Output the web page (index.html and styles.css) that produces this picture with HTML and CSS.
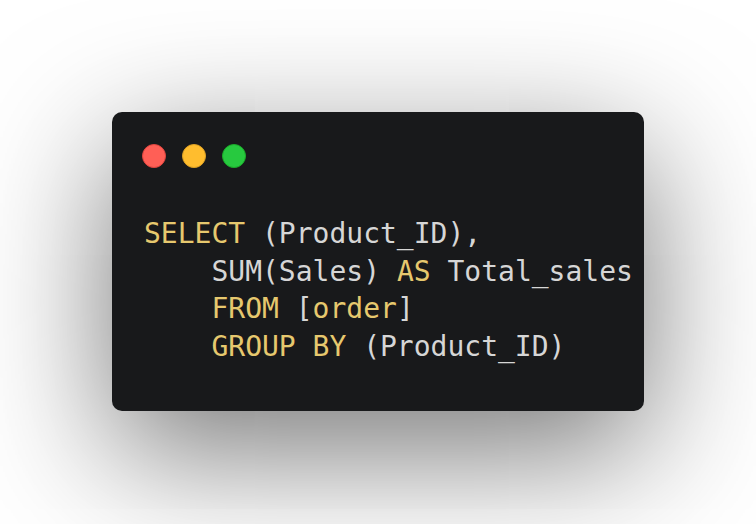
FILE: index.html
```html
<!DOCTYPE html>
<html>
<head>
<meta charset="utf-8">
<link rel="stylesheet" href="styles.css">
</head>
<body>
<div class="window">
  <div class="controls">
    <span class="dot red"></span>
    <span class="dot yellow"></span>
    <span class="dot green"></span>
  </div>
<pre class="code"><span class="kw">SELECT</span> (Product_ID),
    SUM(Sales) <span class="kw">AS</span> Total_sales
    <span class="kw">FROM</span> [<span class="kw">order</span>]
    <span class="kw">GROUP BY</span> (Product_ID)</pre>
</div>
</body>
</html>
```
FILE: styles.css
```css
html, body {
  margin: 0;
  padding: 0;
  background: #ffffff;
  width: 756px;
  height: 524px;
  overflow: hidden;
}
.window {
  margin: 112px 0 0 112px;
  width: 532px;
  height: 299px;
  box-sizing: border-box;
  background: #18191b;
  border-radius: 10px;
  box-shadow: 0 40px 136px rgba(0, 0, 0, 0.55);
  padding: 32px 0 0 30px;
}
.controls {
  display: flex;
  gap: 16px;
  height: 24px;
}
.dot {
  width: 24px;
  height: 24px;
  border-radius: 50%;
  box-sizing: border-box;
}
.red { background: #ff5f56; border: 1px solid #e0443e; }
.yellow { background: #ffbd2e; border: 1px solid #dea123; }
.green { background: #27c93f; border: 1px solid #1aab29; }
.code {
  margin: 47px 0 0 2px;
  font-family: "DejaVu Sans Mono", monospace;
  font-size: 28px;
  line-height: 37.5px;
  color: #d6d6d6;
}
.kw { color: #e6c86e; }
```
